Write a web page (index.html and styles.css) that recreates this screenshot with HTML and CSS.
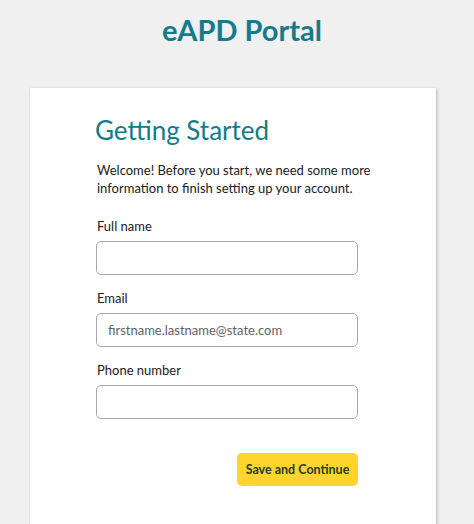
FILE: index.html
```html
<!DOCTYPE html>
<html lang="en">
<head>
<meta charset="utf-8">
<title>eAPD Portal</title>
<link rel="stylesheet" href="styles.css">
</head>
<body>
<div class="page">
  <h1 class="site-title">eAPD Portal</h1>
  <main class="card">
    <div class="content">
      <h2 class="heading">Getting Started</h2>
      <p class="intro">Welcome! Before you start, we need some more information to finish setting up your account.</p>
      <form class="form">
        <div class="field">
          <label class="label" for="name">Full name</label>
          <input class="input" id="name" type="text">
        </div>
        <div class="field">
          <label class="label" for="email">Email</label>
          <input class="input" id="email" type="email" placeholder="firstname.lastname@state.com">
        </div>
        <div class="field">
          <label class="label" for="phone">Phone number</label>
          <input class="input" id="phone" type="tel">
        </div>
        <div class="actions">
          <button class="btn" type="button">Save and Continue</button>
        </div>
      </form>
    </div>
  </main>
</div>
</body>
</html>
```

FILE: styles.css
```css
* { box-sizing: border-box; }
html, body { margin: 0; padding: 0; }
body {
  background: #f0f0f0;
  font-family: "Lato", "Liberation Sans", sans-serif;
  color: #212121;
  height: 524px;
  overflow: hidden;
}
.page {
  padding-top: 12px;
}
.site-title {
  margin: 0;
  text-align: center;
  font-size: 29px;
  font-weight: 700;
  color: #137b8b;
  line-height: 36px;
  padding-left: 10px;
}
.card {
  margin: 40px 0 0 30px;
  width: 406px;
  min-height: 460px;
  background: #fff;
  box-shadow: 1px 1px 3px rgba(0,0,0,0.25);
  padding: 26px 0 0 66px;
}
.content { width: 262px; }
.heading {
  margin: 0;
  font-size: 26px;
  font-weight: 400;
  color: #137b8b;
  line-height: 32px;
  margin-left: -1px;
}
.intro {
  width: 300px;
  margin: 16px 0 0 1px;
  font-size: 13px;
  line-height: 17.5px;
}
.form { margin-top: 20px; }
.field { margin-bottom: 14px; }
.label {
  display: block;
  font-size: 13px;
  line-height: 18px;
  margin-left: 1px;
  margin-bottom: 6px;
}
.input {
  display: block;
  width: 262px;
  height: 34px;
  border: 1px solid #a9a9a9;
  border-radius: 5px;
  padding: 0 11px;
  font-family: inherit;
  font-size: 13px;
  background: #fff;
}
.input::placeholder { color: #5f6366; }
.actions {
  display: flex;
  justify-content: flex-end;
  margin-top: 34px;
}
.btn {
  width: 121px;
  height: 33px;
  background: #fdd52e;
  border: none;
  border-radius: 5px;
  font-family: inherit;
  font-size: 12.5px;
  font-weight: 700;
  color: #2b3a2e;
  padding: 0;
}
```
